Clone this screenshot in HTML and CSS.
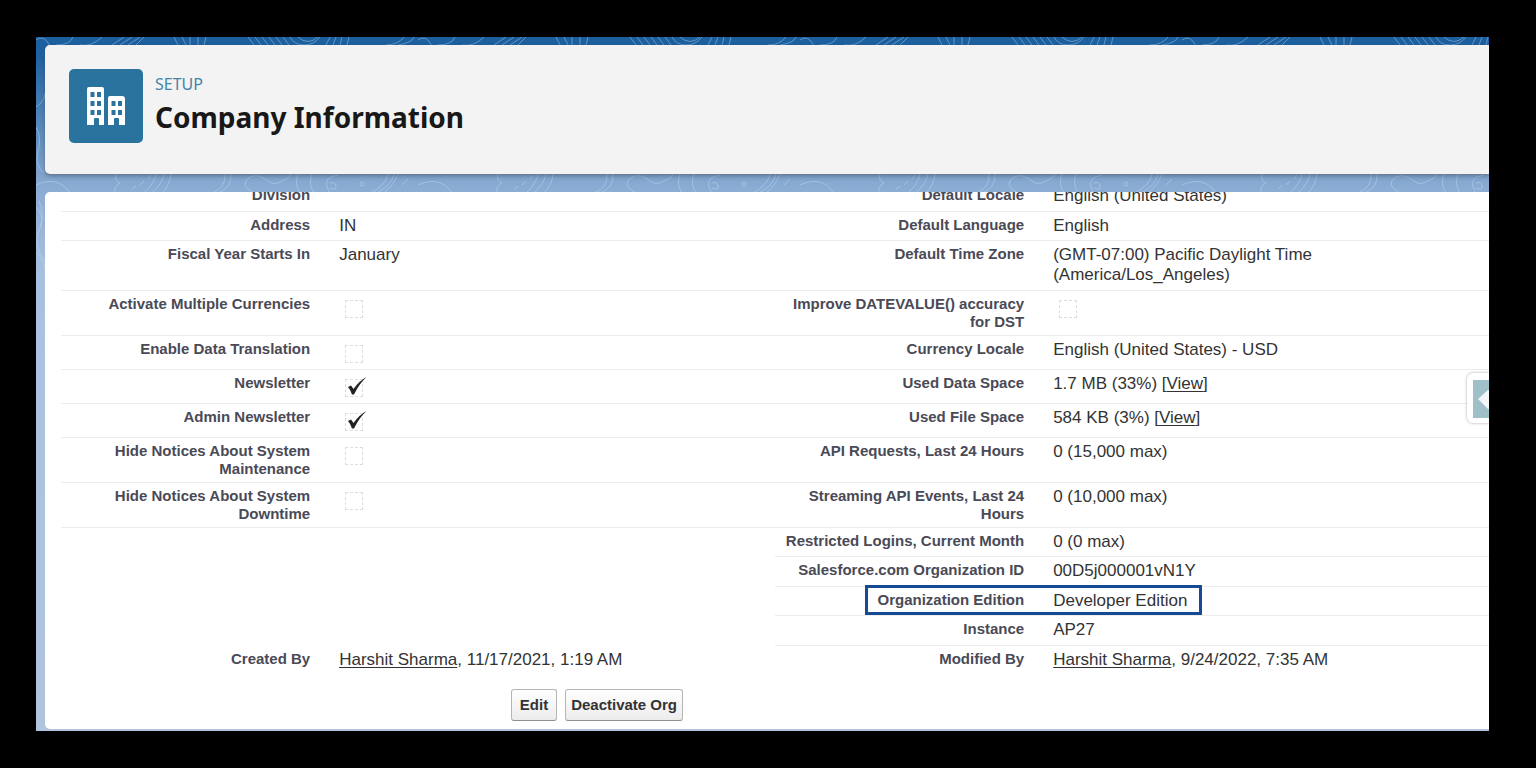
FILE: index.html
```html
<!DOCTYPE html>
<html lang="en">
<head>
<meta charset="utf-8">
<title>Company Information | Setup</title>
<link rel="stylesheet" href="styles.css">
</head>
<body>
<main class="frame">
  <svg class="topo" aria-hidden="true">
    <defs>
      <pattern id="contours" width="382" height="260" patternUnits="userSpaceOnUse">
        <g fill="none" stroke="#cfe4f5" stroke-width="1">
          <path d="M0 3q8 -6 14 6M20 8q14 0 17 -8M44 8q12 2 22 -8M76 8l12 -8M84 8l12 -8M92 8l12 -8M100 8l8 -8M138 0l4 8M146 0l4 8M154 0v8M162 0v8M170 0l-2 8M212 0l6 8M219 0l6 8M226 0l6 8M233 0l6 8M240 0l6 8M247 0l6 8M254 0q4 8 14 8t16 -8M262 0q10 9 20 0M290 8l4 -8M297 8l3 -8M304 8l2 -8M311 8l2 -8M350 8q12 0 18 -8M362 8q14 -2 16 -8"/>
          <path d="M0 148q22 -10 34 8M80 137q-2 6 4 9q-8 4 -4 12M96 152l4 -3M104 148l4 -4M112 142l3 -4M108 156q10 -9 12 -19M116 156q10 -9 12 -19M126 156q8 -8 9 -19M176 156q14 -5 13 -19M182 156q14 -5 13 -19M218 156q-16 -8 -4 -16q8 -4 18 4q6 5 14 0q8 -3 9 -7M262 137q-4 10 2 19M276 137q-4 10 2 19M302 138q-14 2 -11 12t10 6M294 146q5 -2 6 3t-6 2M335 156q15 -8 17 -19M341 156q15 -8 17 -19M348 156q10 -8 14 -19M372 142l-6 6"/>
          <circle cx="326" cy="147" r="2"/>
          <path d="M0 90q6 10 2 24t6 22M0 170q10 10 3 24t6 30M3 164q6 12 1 26M0 215q8 8 9 18M0 70q9 -6 9 -14"/>
        </g>
      </pattern>
    </defs>
    <rect width="100%" height="240" fill="url(#contours)" opacity=".4"/>
  </svg>

  <header class="page-header">
    <svg class="page-icon" viewBox="0 0 74 74" aria-hidden="true">
      <rect width="74" height="74" rx="5" fill="#2a739e"/>
      <path fill="#fff" fill-rule="evenodd" d="M20 18h13q2 0 2 2v36h-5v-6q0-1-1-1h-3q-1 0-1 1v6h-7V20q0-2 2-2zM21.500 23v5h4v-5zM28 23v5h4v-5zM21.500 32v5h4v-5zM28 32v5h4v-5zM21.500 41v5h4v-5zM28 41v5h4v-5z"/>
      <path fill="#fff" fill-rule="evenodd" d="M41 27h12q3 0 3 3v26h-6v-6q0-1-1-1h-3q-1 0-1 1v6h-6V29q0-2 2-2zM42.500 32v5h4v-5zM49 32v5h4v-5zM42.500 41v5h4v-5zM49 41v5h4v-5z"/>
    </svg>
    <div>
      <p class="eyebrow">SETUP</p>
      <h1 class="title">Company Information</h1>
    </div>
  </header>

  <section class="panel">
    <table class="detail">
      <colgroup><col class="c-label"><col class="c-value"><col class="c-label"><col class="c-value"></colgroup>
      <tbody>
        <tr><th scope="row">Division</th><td></td><th scope="row">Default Locale</th><td>English (United States)</td></tr>
        <tr><th scope="row">Address</th><td>IN</td><th scope="row">Default Language</th><td>English</td></tr>
        <tr class="two-line"><th scope="row">Fiscal Year Starts In</th><td>January</td><th scope="row">Default Time Zone</th><td>(GMT-07:00) Pacific Daylight Time<br>(America/Los_Angeles)</td></tr>
        <tr><th scope="row"><label for="multi">Activate Multiple Currencies</label></th><td><input class="check" type="checkbox" id="multi"></td><th scope="row"><label for="dst">Improve DATEVALUE() accuracy for DST</label></th><td><input class="check" type="checkbox" id="dst"></td></tr>
        <tr><th scope="row"><label for="trans">Enable Data Translation</label></th><td><input class="check" type="checkbox" id="trans"></td><th scope="row">Currency Locale</th><td>English (United States) - USD</td></tr>
        <tr><th scope="row"><label for="news">Newsletter</label></th><td><span class="tick"><input class="check" type="checkbox" id="news" checked><svg class="mark" viewBox="0 0 20 18" aria-hidden="true"><path d="M1 10l3-1.500 2.500 3.500Q12 4 19.500 0 12 7 7 17.500H5Q3 12 1 10z"/></svg></span></td><th scope="row">Used Data Space</th><td>1.7 MB (33%) [<a href="#">View</a>]</td></tr>
        <tr><th scope="row"><label for="admin">Admin Newsletter</label></th><td><span class="tick"><input class="check" type="checkbox" id="admin" checked><svg class="mark" viewBox="0 0 20 18" aria-hidden="true"><path d="M1 10l3-1.500 2.500 3.500Q12 4 19.500 0 12 7 7 17.500H5Q3 12 1 10z"/></svg></span></td><th scope="row">Used File Space</th><td>584 KB (3%) [<a href="#">View</a>]</td></tr>
        <tr><th scope="row"><label for="maint">Hide Notices About System Maintenance</label></th><td><input class="check" type="checkbox" id="maint"></td><th scope="row">API Requests, Last 24 Hours</th><td>0 (15,000 max)</td></tr>
        <tr><th scope="row"><label for="down">Hide Notices About System Downtime</label></th><td><input class="check" type="checkbox" id="down"></td><th scope="row">Streaming API Events, Last 24 Hours</th><td>0 (10,000 max)</td></tr>
        <tr><td class="blank" colspan="2"></td><th scope="row">Restricted Logins, Current Month</th><td>0 (0 max)</td></tr>
        <tr><td class="blank" colspan="2"></td><th scope="row">Salesforce.com Organization ID</th><td>00D5j000001vN1Y</td></tr>
        <tr><td class="blank" colspan="2"></td><th scope="row">Organization Edition</th><td class="marked">Developer Edition</td></tr>
        <tr><td class="blank" colspan="2"></td><th scope="row">Instance</th><td>AP27</td></tr>
        <tr class="last"><th scope="row">Created By</th><td><a href="#">Harshit Sharma</a>, 11/17/2021, 1:19 AM</td><th scope="row">Modified By</th><td><a href="#">Harshit Sharma</a>, 9/24/2022, 7:35 AM</td></tr>
      </tbody>
    </table>
    <div class="actions">
      <button class="btn" type="button">Edit</button>
      <button class="btn btn-wide" type="button">Deactivate Org</button>
    </div>
    <button class="side-tab" type="button" aria-label="Open side panel">
      <svg class="side-icon" viewBox="0 0 16 38" aria-hidden="true"><rect width="16" height="38" fill="#9fbfc9"/><path d="M5 19L15 10h1v19h-1z" fill="#f4f4fb"/></svg>
    </button>
  </section>
</main>
</body>
</html>
```
FILE: styles.css
```css
*, *::after { box-sizing: border-box; }

body {
  margin: 0;
  min-height: 100vh;
  padding: 37px 47px 37px 36px;
  background: #000;
  color: #333;
  font: 17px/20px "Liberation Sans", Arial, sans-serif;
}

.frame {
  position: relative;
  display: flex;
  flex-direction: column;
  gap: 18px;
  padding: 8px 0 2px 9px;
  overflow: hidden;
  background: linear-gradient(#1b5f9f 0, #1f62a2 20px, #8aabd3 150px, #a9c1e0 240px, #b0c4de 100%);
}

.topo {
  position: absolute;
  inset: 0;
  width: 100%;
  height: 240px;
}

.page-header {
  position: relative;
  display: flex;
  gap: 12px;
  padding: 24px 24px 31px;
  border-radius: 5px 0 0 5px;
  background: #f3f3f3;
  box-shadow: 0 2px 4px rgba(60, 70, 80, .5);
}

.page-icon { width: 74px; height: 74px; }

.eyebrow {
  margin: 4px 0 0;
  color: #4484a8;
  font: 16px/22px "Noto Sans", sans-serif;
}

.title {
  margin: 3px 0 0;
  color: #181818;
  font: 700 28px/38px "Noto Sans", sans-serif;
}

.panel {
  position: relative;
  padding: 0 0 8px 16px;
  border-radius: 5px 0 0 5px;
  background: #fff;
  overflow: hidden;
}

.detail {
  width: 100%;
  margin-top: -10px;
  table-layout: fixed;
  border-collapse: separate;
  border-spacing: 0;
}

.c-label { width: 18.5%; }
.c-value { width: 31.5%; }

.detail th,
.detail td {
  padding: 4px 0;
  border-bottom: 1px solid #ececec;
  vertical-align: top;
}

.detail tr:nth-child(odd) { height: 30px; }

.detail th {
  padding-right: 15px;
  color: #4a4a56;
  font-size: 15px;
  font-weight: 700;
  line-height: 18px;
  text-align: right;
}

.detail td { padding-left: 14px; }

.detail .two-line td { padding-bottom: 5px; }

.detail .blank,
.detail .last th,
.detail .last td { border-bottom: 0; }

.detail a { color: inherit; text-underline-offset: 2px; }

.check {
  display: block;
  width: 18px;
  height: 18px;
  margin: 5px 0 2px 6px;
  appearance: none;
  border: 1px dashed #ddd;
  background: #fff;
}

.tick { position: relative; display: block; }

.mark {
  position: absolute;
  left: 8px;
  top: -2px;
  width: 20px;
  height: 18px;
  fill: #222;
}

.detail .marked { position: relative; }

.marked::after {
  content: "";
  position: absolute;
  left: -174px;
  top: -2px;
  width: 337px;
  height: 30px;
  border: 3px solid #164b94;
}

.actions {
  display: flex;
  gap: 8px;
  margin-top: 15px;
  padding-left: 31.5%;
}

.btn {
  height: 32px;
  padding: 0 8px;
  border: 1px solid #b5b5b5;
  border-bottom-color: #8f8f8f;
  border-radius: 3px;
  background: linear-gradient(#fff, #ececec);
  color: #333;
  font: 700 15px/20px "Liberation Sans", Arial, sans-serif;
}

.btn-wide { padding: 0 5px; }

.side-tab {
  position: absolute;
  top: 181px;
  right: 0;
  padding: 7px 0 5px 6px;
  border: 0;
  border-radius: 6px 0 0 6px;
  background: #fff;
  box-shadow: 0 0 3px rgba(0, 0, 0, .35);
}

.side-icon { display: block; width: 16px; height: 38px; }
```
